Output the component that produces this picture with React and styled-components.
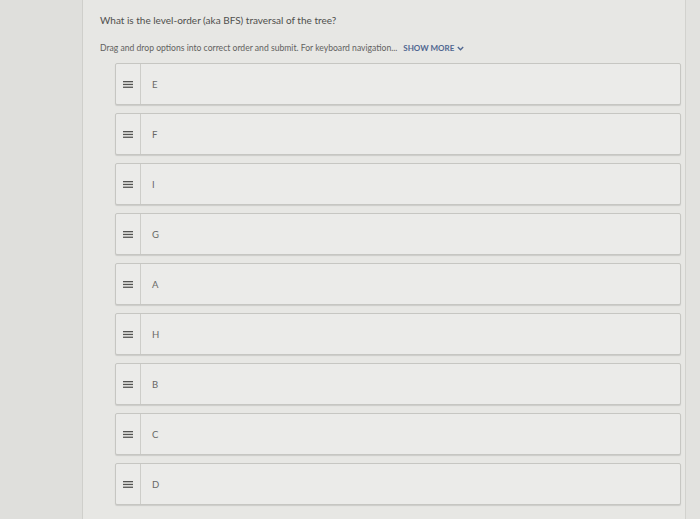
import React from 'react'
import { styled, createGlobalStyle } from 'styled-components'

const options = ['E', 'F', 'I', 'G', 'A', 'H', 'B', 'C', 'D']

const Global = createGlobalStyle`
  html, body {
    margin: 0;
    padding: 0;
    background: #e2e2df;
  }
  body {
    font-family: Lato, "Open Sans", sans-serif;
  }
`

const Page = styled.div`
  display: flex;
  width: 700px;
  height: 519px;
  overflow: hidden;
`

const Side = styled.div`
  width: 82px;
  flex-shrink: 0;
  background: #dfdfdc;
  border-right: 1px solid #cfcfcb;
`

const Main = styled.div`
  width: 603px;
  flex-shrink: 0;
  background: #e7e7e4;
  border-right: 1px solid #d2d2ce;
  padding: 14px 0 0 17px;
  box-sizing: border-box;
`

const Question = styled.div`
  font-size: 10px;
  color: #4f4f4d;
  line-height: 13px;
`

const Hint = styled.div`
  margin-top: 16px;
  font-size: 8.6px;
  color: #626260;
  line-height: 11px;
  display: flex;
  align-items: center;
  gap: 6px;
`

const More = styled.span`
  color: #4f6690;
  font-size: 8px;
  font-weight: 700;
  display: inline-flex;
  align-items: center;
  gap: 3px;
`

const List = styled.div`
  margin-top: 9px;
  margin-left: 15px;
  width: 566px;
  display: flex;
  flex-direction: column;
  gap: 8px;
`

const Card = styled.div`
  height: 40px;
  display: flex;
  background: #ebebe9;
  border: 1px solid #c6c6c2;
  border-radius: 2px;
  box-shadow: 0 1px 1px rgba(0, 0, 0, 0.12);
`

const Handle = styled.div`
  width: 24px;
  border-right: 1px solid #cdcdc9;
  display: flex;
  align-items: center;
  justify-content: center;
`

const Label = styled.div`
  display: flex;
  align-items: center;
  padding-left: 11px;
  font-size: 9.5px;
  color: #686866;
`

function Grip() {
  return (
    <svg width="10" height="7" viewBox="0 0 10 7">
      <rect x="0" y="0" width="10" height="1.3" fill="#555553" />
      <rect x="0" y="2.8" width="10" height="1.3" fill="#555553" />
      <rect x="0" y="5.6" width="10" height="1.3" fill="#555553" />
    </svg>
  )
}

export default function App() {
  return (
    <>
      <Global />
      <Page>
        <Side />
        <Main>
          <Question>What is the level-order (aka BFS) traversal of the tree?</Question>
          <Hint>
            <span>Drag and drop options into correct order and submit. For keyboard navigation...</span>
            <More>
              SHOW MORE
              <svg width="7" height="5" viewBox="0 0 7 5">
                <path d="M0.8 1 L3.5 3.8 L6.2 1" fill="none" stroke="#4f6690" strokeWidth="1.3" />
              </svg>
            </More>
          </Hint>
          <List>
            {options.map((o) => (
              <Card key={o}>
                <Handle>
                  <Grip />
                </Handle>
                <Label>{o}</Label>
              </Card>
            ))}
          </List>
        </Main>
      </Page>
    </>
  )
}
